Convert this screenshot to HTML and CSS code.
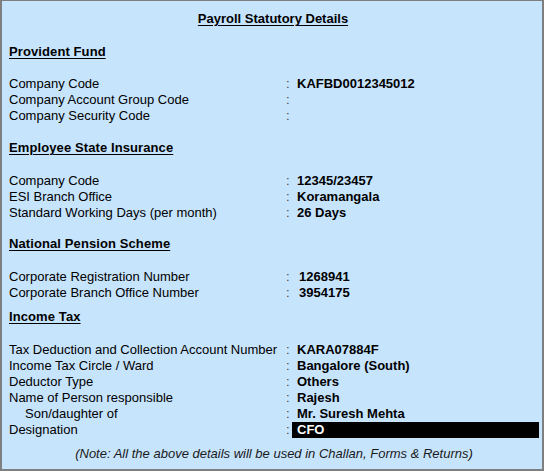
FILE: index.html
```html
<!DOCTYPE html>
<html>
<head>
<meta charset="utf-8">
<link rel="stylesheet" href="styles.css">
</head>
<body>
<div class="panel">
  <div class="title"><span>Payroll Statutory Details</span></div>

  <div class="heading h-pf"><span>Provident Fund</span></div>
  <div class="rows r-pf">
    <div class="row"><span class="label">Company Code</span><span class="colon">:</span><span class="value">KAFBD0012345012</span></div>
    <div class="row"><span class="label">Company Account Group Code</span><span class="colon">:</span><span class="value"></span></div>
    <div class="row"><span class="label">Company Security Code</span><span class="colon">:</span><span class="value"></span></div>
  </div>

  <div class="heading h-esi"><span>Employee State Insurance</span></div>
  <div class="rows r-esi">
    <div class="row"><span class="label">Company Code</span><span class="colon">:</span><span class="value">12345/23457</span></div>
    <div class="row"><span class="label">ESI Branch Office</span><span class="colon">:</span><span class="value">Koramangala</span></div>
    <div class="row"><span class="label">Standard Working Days (per month)</span><span class="colon">:</span><span class="value">26 Days</span></div>
  </div>

  <div class="heading h-nps"><span>National Pension Scheme</span></div>
  <div class="rows r-nps">
    <div class="row"><span class="label">Corporate Registration Number</span><span class="colon">:</span><span class="value shift">1268941</span></div>
    <div class="row"><span class="label">Corporate Branch Office Number</span><span class="colon">:</span><span class="value shift">3954175</span></div>
  </div>

  <div class="heading h-it"><span>Income Tax</span></div>
  <div class="rows r-it">
    <div class="row"><span class="label">Tax Deduction and Collection Account Number</span><span class="colon">:</span><span class="value">KARA07884F</span></div>
    <div class="row"><span class="label">Income Tax Circle / Ward</span><span class="colon">:</span><span class="value">Bangalore (South)</span></div>
    <div class="row"><span class="label">Deductor Type</span><span class="colon">:</span><span class="value">Others</span></div>
    <div class="row"><span class="label">Name of Person responsible</span><span class="colon">:</span><span class="value">Rajesh</span></div>
    <div class="row"><span class="label indent">Son/daughter of</span><span class="colon">:</span><span class="value">Mr. Suresh Mehta</span></div>
    <div class="row"><span class="label">Designation</span><span class="colon">:</span><span class="value active">CFO</span></div>
  </div>

  <div class="note">(Note: All the above details will be used in Challan, Forms &amp; Returns)</div>
</div>
</body>
</html>
```

FILE: styles.css
```css
* { box-sizing: border-box; }
html, body { margin: 0; padding: 0; }
body {
  font-family: "Liberation Sans", Arial, sans-serif;
  font-size: 13px;
  line-height: 16px;
  color: #000;
}
.panel {
  width: 544px;
  height: 471px;
  background: #c7e4fd;
  border-style: solid;
  border-color: #7f7f7f;
  border-width: 1px 2px 2px 2px;
  padding: 10px 3px 0 7px;
  display: flex;
  flex-direction: column;
}
.title {
  text-align: center;
  font-weight: bold;
  padding-right: 2px;
}
.title span,
.heading span {
  text-decoration: underline;
  text-decoration-thickness: 1px;
  text-underline-offset: 2px;
}
.heading {
  font-weight: bold;
  letter-spacing: 0.1px;
}
.h-pf { margin-top: 17px; }
.h-esi { margin-top: 16px; }
.h-nps { margin-top: 15px; }
.h-it { margin-top: 8px; }
.rows { margin-top: 17px; display: flex; flex-direction: column; }
.r-pf { margin-top: 16px; }
.row {
  display: grid;
  grid-template-columns: 277px 6px 1fr;
  height: 16px;
}
.label { white-space: nowrap; }
.label.indent { padding-left: 16px; }
.colon { color: #444; }
.value {
  font-weight: bold;
  padding-left: 5px;
  white-space: nowrap;
}
.value.shift { padding-left: 7px; }
.value.active {
  background: #000;
  color: #fff;
}
.note {
  margin-top: 8px;
  text-align: center;
  font-style: italic;
  color: #1a1a1a;
}
```
